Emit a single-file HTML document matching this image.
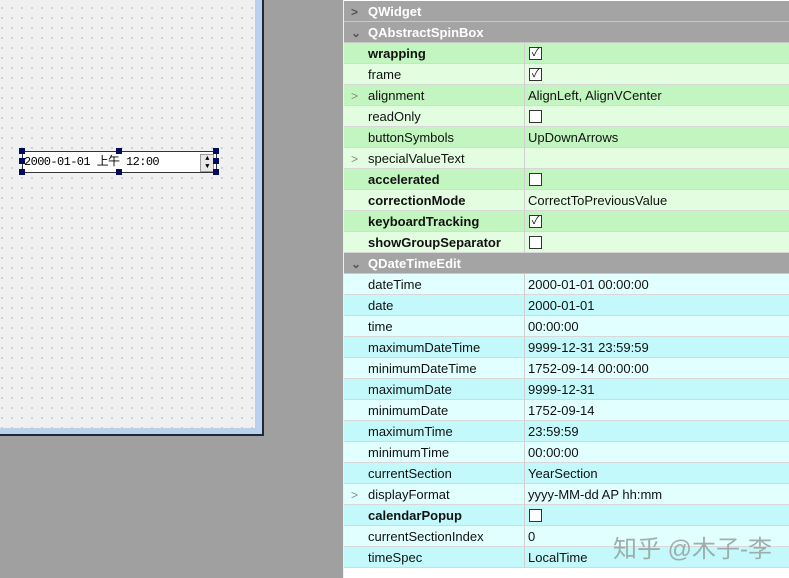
<!DOCTYPE html>
<html><head><meta charset="utf-8"><style>
body{margin:0;width:789px;height:578px;background:#a0a0a0;position:relative;overflow:hidden;font-family:"Liberation Sans","Noto Sans CJK SC",sans-serif;}
#form{position:absolute;left:0;top:0;width:255px;height:428px;background-color:#f0f0f0;background-image:radial-gradient(circle,#aaa 0.6px,transparent 0.9px);background-size:10px 10px;background-position:-3px 3px;}
#bR{position:absolute;left:255px;top:0;width:7px;height:434px;background:#b9d1ea;}
#bB{position:absolute;left:0;top:428px;width:262px;height:6px;background:#b9d1ea;}
#dR{position:absolute;left:262px;top:0;width:2px;height:436px;background:#1a2a3a;}
#dB{position:absolute;left:0;top:434px;width:264px;height:2px;background:#1a2a3a;}
#spin{position:absolute;left:22px;top:151px;width:193px;height:20px;background:#fff;border:1px solid #333;font-size:12px;line-height:20px;font-family:"Liberation Mono","Noto Sans CJK SC",monospace;letter-spacing:-0.6px}
#spin span{padding-left:1px;color:#000}
#arr{position:absolute;right:2px;top:2px;width:12px;height:16px;background:#e8e8e8;border:1px solid #999;font-size:7px;line-height:8px;text-align:center}
.h{position:absolute;width:6px;height:6px;background:#000a60;}
#panel{position:absolute;left:343px;top:0;width:446px;height:578px;background:#fff;border-left:1px solid #eee}
.r{position:absolute;left:0;width:446px;height:20px;border-bottom:1px solid #d8d8d8;font-size:13px;line-height:22px;color:#111}
.r .n{position:absolute;left:24px}
.r .v{position:absolute;left:180px;border-left:1px solid #d0d0d0;padding-left:3px;height:21px;top:0}
.r .a{position:absolute;left:7px;color:#888;font-size:12px}
.hd{background:#a4a4a4;color:#fff;font-weight:bold;border-bottom:1px solid #c8c8c8}
.hd .a{color:#555}
.g1{background:#c2f5bf}.g2{background:#e2fde0}
.c1{background:#e1ffff}.c2{background:#c3f9fb}
.b{font-weight:bold}
.cb{position:absolute;left:4px;top:4px;width:11px;height:11px;border:1px solid #333;background:#fff;font-size:11px;line-height:11px;text-align:center;font-weight:normal}
#wm{position:absolute;left:613px;top:529px;font-size:24px;color:rgba(150,160,160,0.85)}
</style></head><body>
<div id="form"></div><div id="bR"></div><div id="bB"></div><div id="dR"></div><div id="dB"></div>
<div id="spin"><span>2000-01-01 上午 12:00</span><div id="arr">▲<br>▼</div></div>
<div class="h" style="left:19px;top:148px"></div><div class="h" style="left:116px;top:148px"></div><div class="h" style="left:213px;top:148px"></div>
<div class="h" style="left:19px;top:158px"></div><div class="h" style="left:213px;top:158px"></div>
<div class="h" style="left:19px;top:169px"></div><div class="h" style="left:116px;top:169px"></div><div class="h" style="left:213px;top:169px"></div>
<div id="panel">
<div class="r hd" style="top:1px"><span class="a">&gt;</span><span class="n">QWidget</span></div>
<div class="r hd" style="top:22px"><span class="a">⌄</span><span class="n">QAbstractSpinBox</span></div>
<div class="r g1 b" style="top:43px"><span class="n">wrapping</span><span class="v"><span class="cb">✓</span></span></div>
<div class="r g2" style="top:64px"><span class="n">frame</span><span class="v"><span class="cb">✓</span></span></div>
<div class="r g1" style="top:85px"><span class="a">&gt;</span><span class="n">alignment</span><span class="v">AlignLeft, AlignVCenter</span></div>
<div class="r g2" style="top:106px"><span class="n">readOnly</span><span class="v"><span class="cb"></span></span></div>
<div class="r g1" style="top:127px"><span class="n">buttonSymbols</span><span class="v">UpDownArrows</span></div>
<div class="r g2" style="top:148px"><span class="a">&gt;</span><span class="n">specialValueText</span><span class="v"></span></div>
<div class="r g1 b" style="top:169px"><span class="n">accelerated</span><span class="v"><span class="cb"></span></span></div>
<div class="r g2" style="top:190px"><span class="n b">correctionMode</span><span class="v">CorrectToPreviousValue</span></div>
<div class="r g1 b" style="top:211px"><span class="n">keyboardTracking</span><span class="v"><span class="cb">✓</span></span></div>
<div class="r g2 b" style="top:232px"><span class="n">showGroupSeparator</span><span class="v"><span class="cb"></span></span></div>
<div class="r hd" style="top:253px"><span class="a">⌄</span><span class="n">QDateTimeEdit</span></div>
<div class="r c1" style="top:274px"><span class="n">dateTime</span><span class="v">2000-01-01 00:00:00</span></div>
<div class="r c2" style="top:295px"><span class="n">date</span><span class="v">2000-01-01</span></div>
<div class="r c1" style="top:316px"><span class="n">time</span><span class="v">00:00:00</span></div>
<div class="r c2" style="top:337px"><span class="n">maximumDateTime</span><span class="v">9999-12-31 23:59:59</span></div>
<div class="r c1" style="top:358px"><span class="n">minimumDateTime</span><span class="v">1752-09-14 00:00:00</span></div>
<div class="r c2" style="top:379px"><span class="n">maximumDate</span><span class="v">9999-12-31</span></div>
<div class="r c1" style="top:400px"><span class="n">minimumDate</span><span class="v">1752-09-14</span></div>
<div class="r c2" style="top:421px"><span class="n">maximumTime</span><span class="v">23:59:59</span></div>
<div class="r c1" style="top:442px"><span class="n">minimumTime</span><span class="v">00:00:00</span></div>
<div class="r c2" style="top:463px"><span class="n">currentSection</span><span class="v">YearSection</span></div>
<div class="r c1" style="top:484px"><span class="a">&gt;</span><span class="n">displayFormat</span><span class="v">yyyy-MM-dd AP hh:mm</span></div>
<div class="r c2 b" style="top:505px"><span class="n">calendarPopup</span><span class="v"><span class="cb"></span></span></div>
<div class="r c1" style="top:526px"><span class="n">currentSectionIndex</span><span class="v">0</span></div>
<div class="r c2" style="top:547px"><span class="n">timeSpec</span><span class="v">LocalTime</span></div>
</div>
<div id="wm">知乎 @木子-李</div>
</body></html>
